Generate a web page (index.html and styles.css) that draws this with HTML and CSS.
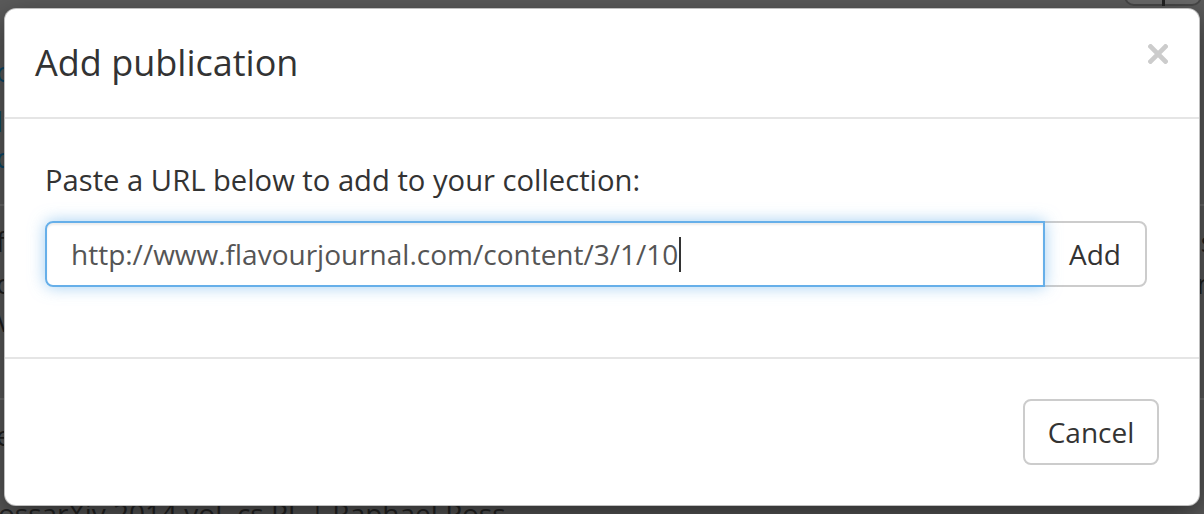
FILE: index.html
```html
<!DOCTYPE html>
<html lang="en">
<head>
<meta charset="utf-8">
<title>Add publication</title>
<link rel="stylesheet" href="styles.css">
</head>
<body>
<div class="page">
  <div class="page-top"><span class="page-btn"><span class="page-btn-glyph"></span></span></div>
  <div class="page-row link r1"><span>o</span></div>
  <div class="page-row link r2"><span>l</span></div>
  <div class="page-row link r3"><span>d</span></div>
  <div class="page-sep s1"></div>
  <div class="page-row r4"><span>f</span><span class="edge-r">s</span></div>
  <div class="page-row r5"><span>c</span><span class="edge-r">n</span></div>
  <div class="page-row r6"><span>V</span></div>
  <div class="page-sep s2"></div>
  <div class="page-row r7"><span>e</span></div>
  <div class="page-row r8"><span>ossarXiv 2014 vol. cs.PL | Raphael Poss</span></div>
</div>

<div class="modal" role="dialog">
  <div class="modal-header">
    <h4 class="modal-title">Add publication</h4>
    <button class="close" type="button" aria-label="Close">
      <svg width="20" height="20" viewBox="0 0 20 20"><path d="M2.5 2.5 L17.5 17.5 M17.5 2.5 L2.5 17.5" stroke="#cccccc" stroke-width="4.6" stroke-linecap="square"/></svg>
    </button>
  </div>
  <div class="modal-body">
    <p class="label">Paste a URL below to add to your collection:</p>
    <div class="input-group">
      <div class="form-control">http://www.flavourjournal.com/content/3/1/10<span class="caret"></span></div>
      <button class="btn btn-add" type="button">Add</button>
    </div>
  </div>
  <div class="modal-footer">
    <button class="btn btn-cancel" type="button">Cancel</button>
  </div>
</div>
</body>
</html>
```

FILE: styles.css
```css
html, body {
  margin: 0;
  padding: 0;
}

body {
  width: 1204px;
  height: 514px;
  overflow: hidden;
  position: relative;
  background: #5b5b5b;
  font-family: "Open Sans", "DejaVu Sans", sans-serif;
}

/* dimmed page behind the dialog */
.page {
  display: flex;
  flex-direction: column;
}

.page-top {
  height: 6px;
  display: flex;
  justify-content: flex-end;
}

.page-btn {
  width: 78px;
  height: 26px;
  margin-top: -20px;
  margin-right: 2px;
  box-sizing: border-box;
  border: 2px solid #474747;
  border-radius: 0 0 10px 10px;
  background: #6a6a6a;
  display: flex;
  justify-content: center;
}

.page-btn-glyph {
  width: 3px;
  height: 24px;
  background: #222;
}

.page-row {
  display: flex;
  justify-content: space-between;
  white-space: nowrap;
  font-size: 28px;
  line-height: 30px;
  height: 30px;
  margin-left: -4px;
  color: #1f1f1f;
}

.page-row.link {
  color: #0b4a6b;
}

.edge-r {
  margin-right: -10px;
}

.r1 { margin-top: 50px; }
.r2 { margin-top: 20px; }
.r3 { margin-top: 6px; }

.page-sep {
  height: 2px;
  background: #6d6d6d;
}

.s1 { margin-top: 32px; }
.r4 { margin-top: 20px; }
.r5 { margin-top: 12px; }
.r6 { margin-top: 8px; }
.s2 { margin-top: 62px; }
.r7 { margin-top: 20px; }
.r8 { margin-top: 48px; margin-left: -2px; color: #262626; }

/* dialog */
.modal {
  position: absolute;
  left: 4px;
  top: 8px;
  width: 1196px;
  height: 498px;
  box-sizing: border-box;
  background: #fff;
  border: 1px solid rgba(0, 0, 0, 0.25);
  border-radius: 12px;
  box-shadow: 0 10px 30px rgba(0, 0, 0, 0.5);
  display: flex;
  flex-direction: column;
  overflow: hidden;
}

.modal-header {
  height: 110px;
  box-sizing: border-box;
  flex: none;
  border-bottom: 2px solid #e5e5e5;
  display: flex;
  align-items: flex-start;
  justify-content: space-between;
  padding: 28px 31px 0 30px;
}

.modal-title {
  margin: 0;
  font-size: 36px;
  line-height: 51px;
  font-weight: 400;
  color: #333;
}

.close {
  margin-top: 7px;
  padding: 0;
  border: 0;
  background: none;
  width: 20px;
  height: 20px;
  display: block;
}

.close svg {
  display: block;
}

.modal-body {
  height: 238px;
  flex: none;
  box-sizing: border-box;
  padding: 43px 52px 0 40px;
}

.label {
  margin: 0;
  font-size: 29.2px;
  line-height: 37px;
  color: #333;
}

.input-group {
  margin-top: 22px;
  display: flex;
  height: 66px;
}

.form-control {
  position: relative;
  z-index: 2;
  width: 1000px;
  box-sizing: border-box;
  border: 2px solid #66afe9;
  border-radius: 8px 0 0 8px;
  box-shadow: inset 0 2px 2px rgba(0, 0, 0, 0.075), 0 0 16px rgba(102, 175, 233, 0.6);
  padding: 0 24px;
  font-size: 28px;
  color: #555;
  display: flex;
  align-items: center;
  white-space: nowrap;
}

.caret {
  display: inline-block;
  width: 2px;
  height: 35px;
  margin-left: 1px;
  background: #333;
}

.btn {
  font-family: inherit;
  font-size: 28px;
  color: #333;
  background: #fff;
  border: 2px solid #ccc;
  padding: 0;
  box-sizing: border-box;
  height: 66px;
}

.btn-add {
  width: 104px;
  margin-left: -2px;
  border-radius: 0 8px 8px 0;
}

.modal-footer {
  flex: 1;
  border-top: 2px solid #e5e5e5;
  display: flex;
  justify-content: flex-end;
  align-items: flex-start;
  padding: 40px 40px 0 0;
}

.btn-cancel {
  width: 136px;
  border-radius: 8px;
}
```
